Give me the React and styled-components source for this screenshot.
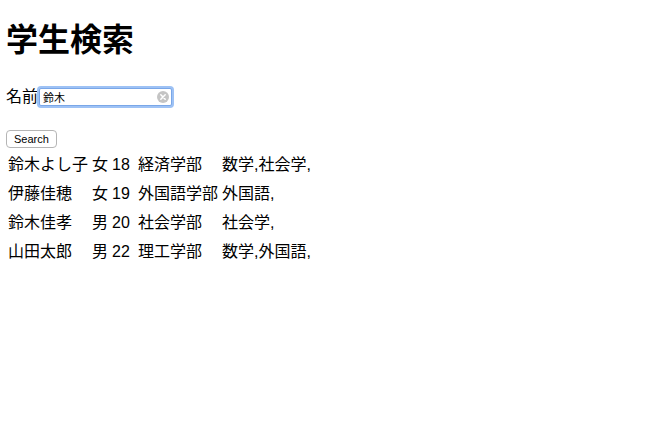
import styled, { createGlobalStyle } from "styled-components";

const GlobalStyle = createGlobalStyle`
    body {
        margin: 8px 6px;
        font-family: "Liberation Sans", "Noto Sans CJK JP", sans-serif;
        font-size: 16px;
        color: #000;
        background: #fff;
    }
`

const Title = styled.h1`
    font-family: "Noto Sans CJK JP", sans-serif;
    font-size: 32px;
    font-weight: 700;
    margin: 9px 0 30px;
    line-height: 40px;
`

const SearchForm = styled.form`
    display: flex;
    flex-direction: column;
    align-items: flex-start;
    gap: 23px;
`

const NameRow = styled.label`
    display: flex;
    align-items: center;
    line-height: 20px;
`

const InputWrap = styled.span`
    position: relative;
    display: inline-flex;
    margin-left: 1px;
`

const NameInput = styled.input`
    width: 133px;
    height: 18px;
    box-sizing: border-box;
    padding: 0 18px 0 3px;
    font-family: "Noto Sans CJK JP", sans-serif;
    font-size: 11px;
    color: #000;
    border: 1px solid #7aa7e8;
    border-radius: 2px;
    outline: none;
    box-shadow: 0 0 0 2px #9ec2f5;
`

const ClearIcon = styled.svg`
    position: absolute;
    right: 3px;
    top: 3px;
    width: 12px;
    height: 12px;
`

const SearchButton = styled.button`
    font-family: "Liberation Sans", Arial, sans-serif;
    font-size: 11px;
    height: 18px;
    padding: 0 7px;
    background: #fff;
    border: 1px solid #b5b5b5;
    border-radius: 4px;
    color: #000;
`

const StudentTable = styled.table`
    border-spacing: 2px;
    margin-top: 1px;
    margin-left: -1px;
`

const Cell = styled.td`
    padding: 1px;
    line-height: 25px;
    white-space: nowrap;
    min-width: ${props => props.minWidth || 0}px;
`

const students = [
    { name: "鈴木よし子", sex: "女", age: 18, dept: "経済学部", subjects: ["数学", "社会学"] },
    { name: "伊藤佳穂", sex: "女", age: 19, dept: "外国語学部", subjects: ["外国語"] },
    { name: "鈴木佳孝", sex: "男", age: 20, dept: "社会学部", subjects: ["社会学"] },
    { name: "山田太郎", sex: "男", age: 22, dept: "理工学部", subjects: ["数学", "外国語"] },
];

function App() {
    return (
        <>
            <GlobalStyle />
            <Title>学生検索</Title>
            <SearchForm onSubmit={e => e.preventDefault()}>
                <NameRow>
                    名前
                    <InputWrap>
                        <NameInput type="text" defaultValue="鈴木" />
                        <ClearIcon viewBox="0 0 12 12">
                            <circle cx="6" cy="6" r="6" fill="#c4c4c4" />
                            <path d="M3.8 3.8 L8.2 8.2 M8.2 3.8 L3.8 8.2" stroke="#fff" strokeWidth="1.5" strokeLinecap="round" />
                        </ClearIcon>
                    </InputWrap>
                </NameRow>
                <SearchButton type="submit">Search</SearchButton>
            </SearchForm>
            <StudentTable>
                <tbody>
                    {students.map(s => (
                        <tr key={s.name}>
                            <Cell>{s.name}</Cell>
                            <Cell>{s.sex}</Cell>
                            <Cell minWidth={22}>{s.age}</Cell>
                            <Cell>{s.dept}</Cell>
                            <Cell>{s.subjects.map(sub => sub + ",")}</Cell>
                        </tr>
                    ))}
                </tbody>
            </StudentTable>
        </>
    );
}

export default App;
